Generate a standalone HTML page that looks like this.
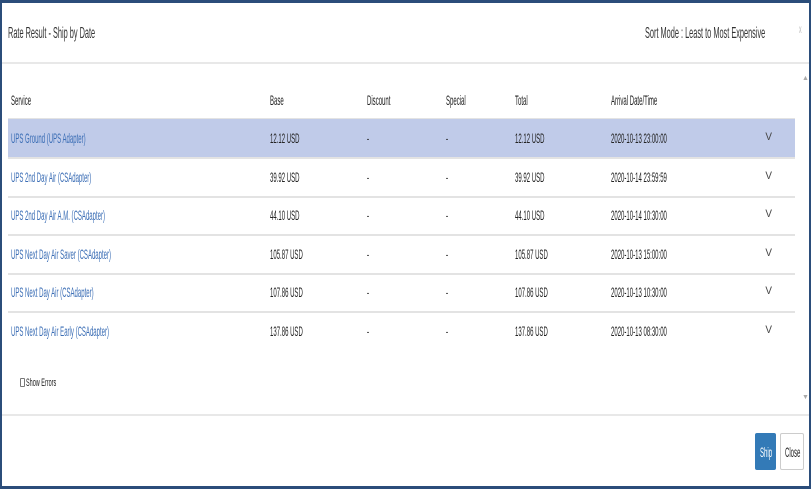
<!DOCTYPE html>
<html><head><meta charset="utf-8"><style>
*{margin:0;padding:0;box-sizing:border-box}
body{width:811px;height:489px;overflow:hidden;background:#fff;font-family:"Liberation Sans",sans-serif;position:relative}
.frame{position:absolute;left:0;top:0;width:811px;height:489px;border:2px solid #2b4d7a;border-top-width:3px;border-bottom-width:3px}
.t{position:absolute;white-space:nowrap;transform:scaleX(0.43);transform-origin:0 50%;color:#222;font-size:14px;line-height:16px}
.lk{color:#3a6db5}
.line{position:absolute;height:1px;background:#e3e3e3}
.row{position:absolute;left:8px;width:787px;height:38px}
.chev{position:absolute;left:765px;font-size:11px;color:#444;transform:scaleX(0.9)}
</style></head><body>
<div class="frame"></div>
<div class="t" style="left:8px;top:25px;font-size:16px;line-height:18px;transform:scaleX(0.46);color:#333">Rate Result - Ship by Date</div>
<div class="t" style="left:645px;top:25px;font-size:16px;line-height:18px;transform:scaleX(0.46);color:#333">Sort Mode : Least to Most Expensive</div>
<div class="t" style="left:799px;top:21px;color:#bbb;font-size:12px">x</div>
<div class="line" style="left:2px;top:62px;width:807px;height:2px;background:#e8e8e8"></div>
<div style="position:absolute;left:802px;top:75px;color:#aaa;font-size:7px">▲</div>
<div style="position:absolute;left:802px;top:394px;color:#aaa;font-size:7px">▼</div>
<div class="t" style="left:11px;top:92px">Service</div>
<div class="t" style="left:270px;top:92px">Base</div>
<div class="t" style="left:367px;top:92px">Discount</div>
<div class="t" style="left:446px;top:92px">Special</div>
<div class="t" style="left:515px;top:92px">Total</div>
<div class="t" style="left:611px;top:92px">Arrival Date/Time</div>
<div class="line" style="left:8px;top:118px;width:787px;height:2px"></div>
<div class="row" style="top:119px;background:#c0cbe9"></div>
<div class="line" style="left:8px;top:157px;width:787px;height:2px"></div>
<div class="line" style="left:8px;top:196px;width:787px;height:2px"></div>
<div class="line" style="left:8px;top:234px;width:787px;height:2px"></div>
<div class="line" style="left:8px;top:273px;width:787px;height:2px"></div>
<div class="line" style="left:8px;top:311px;width:787px;height:2px"></div>

<div class="t lk" style="left:11px;top:130px">UPS Ground (UPS Adapter)</div>
<div class="t" style="left:270px;top:130px">12.12 USD</div><div class="t" style="left:367px;top:130px">-</div><div class="t" style="left:446px;top:130px">-</div><div class="t" style="left:515px;top:130px">12.12 USD</div><div class="t" style="left:611px;top:130px">2020-10-13 23:00:00</div><div class="chev" style="top:131px">V</div>

<div class="t lk" style="left:11px;top:169px">UPS 2nd Day Air (CSAdapter)</div>
<div class="t" style="left:270px;top:169px">39.92 USD</div><div class="t" style="left:367px;top:169px">-</div><div class="t" style="left:446px;top:169px">-</div><div class="t" style="left:515px;top:169px">39.92 USD</div><div class="t" style="left:611px;top:169px">2020-10-14 23:59:59</div><div class="chev" style="top:170px">V</div>

<div class="t lk" style="left:11px;top:207px">UPS 2nd Day Air A.M. (CSAdapter)</div>
<div class="t" style="left:270px;top:207px">44.10 USD</div><div class="t" style="left:367px;top:207px">-</div><div class="t" style="left:446px;top:207px">-</div><div class="t" style="left:515px;top:207px">44.10 USD</div><div class="t" style="left:611px;top:207px">2020-10-14 10:30:00</div><div class="chev" style="top:208px">V</div>

<div class="t lk" style="left:11px;top:246px">UPS Next Day Air Saver (CSAdapter)</div>
<div class="t" style="left:270px;top:246px">105.87 USD</div><div class="t" style="left:367px;top:246px">-</div><div class="t" style="left:446px;top:246px">-</div><div class="t" style="left:515px;top:246px">105.87 USD</div><div class="t" style="left:611px;top:246px">2020-10-13 15:00:00</div><div class="chev" style="top:247px">V</div>

<div class="t lk" style="left:11px;top:284px">UPS Next Day Air (CSAdapter)</div>
<div class="t" style="left:270px;top:284px">107.86 USD</div><div class="t" style="left:367px;top:284px">-</div><div class="t" style="left:446px;top:284px">-</div><div class="t" style="left:515px;top:284px">107.86 USD</div><div class="t" style="left:611px;top:284px">2020-10-13 10:30:00</div><div class="chev" style="top:285px">V</div>

<div class="t lk" style="left:11px;top:323px">UPS Next Day Air Early (CSAdapter)</div>
<div class="t" style="left:270px;top:323px">137.86 USD</div><div class="t" style="left:367px;top:323px">-</div><div class="t" style="left:446px;top:323px">-</div><div class="t" style="left:515px;top:323px">137.86 USD</div><div class="t" style="left:611px;top:323px">2020-10-13 08:30:00</div><div class="chev" style="top:324px">V</div>

<div style="position:absolute;left:20px;top:378px;width:5px;height:9px;border:1px solid #777;border-radius:1px"></div>
<div class="t" style="left:26px;top:377px;font-size:11px;line-height:13px;transform:scaleX(0.5)">Show Errors</div>
<div class="line" style="left:2px;top:414px;width:807px;height:2px;background:#e8e8e8"></div>
<div style="position:absolute;left:755px;top:433px;width:21px;height:37px;background:#337ab7;border-radius:2px"></div>
<div class="t" style="left:760px;top:444px;color:#fff">Ship</div>
<div style="position:absolute;left:780px;top:433px;width:24px;height:37px;border:1px solid #ccc;border-radius:2px;background:#fff"></div>
<div class="t" style="left:785px;top:444px">Close</div>
</body></html>
